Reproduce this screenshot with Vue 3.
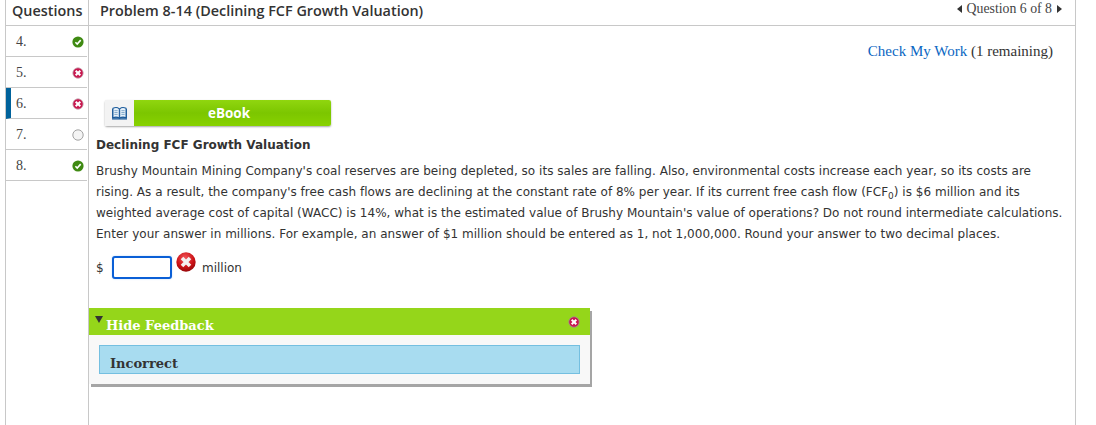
<template>
  <div class="page">
    <header class="topbar">
      <div class="questions-title">Questions</div>
      <div class="problem-title">Problem 8-14 (Declining FCF Growth Valuation)</div>
      <div class="pager">
        <span class="arrow-left"></span>
        <span>Question 6 of 8</span>
        <span class="arrow-right"></span>
      </div>
    </header>

    <div class="content">
      <aside class="sidebar">
        <div
          v-for="q in questions"
          :key="q.num"
          class="row"
          :class="{ current: q.num === 6 }"
        >
          <span class="num">{{ q.num }}.</span>
          <svg v-if="q.status === 'ok'" class="status" viewBox="0 0 12 12">
            <circle cx="6" cy="6" r="5.6" fill="#3f8a12" />
            <path d="M3.4 6.2 5.2 8 8.7 4.1" fill="none" stroke="#fff" stroke-width="1.6" />
          </svg>
          <svg v-else-if="q.status === 'bad'" class="status" viewBox="0 0 12 12">
            <circle cx="6" cy="6" r="5.2" fill="#c8174f" stroke="#c4aab2" stroke-width="0.8" />
            <path d="M3.7 3.7 8.3 8.3M8.300 3.700 3.700 8.300" fill="none" stroke="#fff" stroke-width="2" />
          </svg>
          <svg v-else class="status" viewBox="0 0 12 12">
            <circle cx="6" cy="6" r="5.2" fill="#f4f4f4" stroke="#8d8d8d" stroke-width="0.8" />
          </svg>
        </div>
      </aside>

      <main class="main">
        <div class="check-line">
          <a class="check-link">Check My Work</a>
          <span> (1 remaining)</span>
        </div>

        <div class="ebook">
          <div class="ebook-icon">
            <svg width="17" height="14" viewBox="0 0 18 15">
              <path d="M1 13V3h16v10" fill="#1b5a9a" />
              <path d="M2 2.5C4 1.5 7 1.500 8.800 3v10C7 11.800 4 11.800 2 12.500Z" fill="#e8f2fa" stroke="#1b5a9a" stroke-width="1.1" />
              <path d="M16 2.500C14 1.500 11 1.500 9.200 3v10C11 11.800 14 11.800 16 12.500Z" fill="#e8f2fa" stroke="#1b5a9a" stroke-width="1.1" />
              <path d="M3.500 5h3.500M3.500 7h3.500M3.500 9h3.500M11 5h3.500M11 7h3.500M11 9h3.500" stroke="#6f9cc4" stroke-width="0.9" />
              <path d="M1 13.800h16" stroke="#1b5a9a" stroke-width="1.4" />
            </svg>
          </div>
          <div class="ebook-btn">eBook</div>
        </div>

        <h2 class="heading">Declining FCF Growth Valuation</h2>

        <p class="text">
          Brushy Mountain Mining Company's coal reserves are being depleted, so its sales are falling. Also, environmental costs increase each year, so its costs are<br />
          rising. As a result, the company's free cash flows are declining at the constant rate of 8% per year. If its current free cash flow (FCF<sub>0</sub>) is $6 million and its<br />
          weighted average cost of capital (WACC) is 14%, what is the estimated value of Brushy Mountain's value of operations? Do not round intermediate calculations.<br />
          Enter your answer in millions. For example, an answer of $1 million should be entered as 1, not 1,000,000. Round your answer to two decimal places.
        </p>

        <div class="answer">
          <span class="dollar">$</span>
          <input class="answer-input" type="text" />
          <svg class="wrong" width="20" height="20" viewBox="0 0 20 20">
            <defs>
              <radialGradient id="redBall" cx="45%" cy="30%" r="75%">
                <stop offset="0" stop-color="#f2565a" />
                <stop offset="0.6" stop-color="#cc1216" />
                <stop offset="1" stop-color="#8c0608" />
              </radialGradient>
            </defs>
            <circle cx="10" cy="10" r="9.700" fill="url(#redBall)" />
            <path d="M6 6 14 14M14 6 6 14" stroke="#f4f0f0" stroke-width="3.600" />
          </svg>
          <span class="unit">million</span>
        </div>

        <section class="feedback">
          <div class="feedback-head">
            <span class="caret"></span>
            <span class="hide-label">Hide Feedback</span>
            <svg class="feedback-close" width="12" height="12" viewBox="0 0 12 12">
              <circle cx="6" cy="6" r="5.200" fill="#c8174f" stroke="#a58c94" stroke-width="0.800" />
              <path d="M3.700 3.700 8.300 8.300M8.300 3.700 3.700 8.300" fill="none" stroke="#fff" stroke-width="2" />
            </svg>
          </div>
          <div class="feedback-body">
            <div class="incorrect">Incorrect</div>
          </div>
        </section>
      </main>
    </div>
  </div>
</template>

<script setup>
const questions = [
  { num: 4, status: "ok" },
  { num: 5, status: "bad" },
  { num: 6, status: "bad" },
  { num: 7, status: "none" },
  { num: 8, status: "ok" },
];
</script>

<style>
html,
body {
  margin: 0;
  background: #fff;
  overflow: hidden;
}
</style>

<style scoped>
.page {
  width: 1071px;
  height: 425px;
  margin-left: 5px;
  border-left: 1px solid #c8c8c8;
  border-right: 1px solid #c8c8c8;
  box-sizing: border-box;
  overflow: hidden;
  color: #333;
}

.topbar {
  display: flex;
  align-items: center;
  height: 26px;
  border-bottom: 1px solid #c8c8c8;
  box-sizing: border-box;
}

.questions-title {
  width: 83px;
  box-sizing: border-box;
  height: 100%;
  padding-left: 6px;
  border-right: 1px solid #c8c8c8;
  font: 600 14.400px/22px "Open Sans", sans-serif;
}

.problem-title {
  flex: 1;
  padding-left: 11px;
  font: 600 14.400px/22px "Open Sans", sans-serif;
  height: 100%;
}

.pager {
  display: flex;
  align-items: center;
  gap: 5px;
  padding-right: 13px;
  height: 100%;
  margin-top: -8px;
  font: 13.800px "Liberation Serif", serif;
  color: #444;
}

.arrow-left,
.arrow-right {
  width: 0;
  height: 0;
  border-top: 4px solid transparent;
  border-bottom: 4px solid transparent;
}

.arrow-left {
  border-right: 5px solid #333;
}

.arrow-right {
  border-left: 5px solid #333;
}

.content {
  display: flex;
  height: 399px;
}

.sidebar {
  width: 83px;
  height: 100%;
  box-sizing: border-box;
  border-right: 1px solid #c8c8c8;
  flex-shrink: 0;
}

.row {
  display: flex;
  align-items: center;
  justify-content: space-between;
  height: 31px;
  box-sizing: border-box;
  margin-right: 1px;
  padding: 2px 3px 0 10px;
  border-bottom: 1px solid #c8c8c8;
  font: 14px "Liberation Serif", serif;
  color: #444;
}

.row.current {
  padding-left: 5px;
  border-left: 5px solid #00629b;
}

.status {
  width: 12px;
  height: 12px;
  margin-top: -1px;
}

.main {
  flex: 1;
  min-width: 0;
  padding: 0 0 0 7px;
}

.check-line {
  margin-top: 15px;
  padding-right: 22px;
  text-align: right;
  font: 15px/20px "Liberation Serif", serif;
  color: #333;
}

.check-link {
  color: #0a66c2;
}

.ebook {
  display: flex;
  width: 226px;
  height: 26px;
  margin: 39px 0 0 9px;
  box-shadow: 0 1px 2px rgba(0, 0, 0, 0.35);
  border-radius: 2px;
}

.ebook-icon {
  width: 29px;
  display: flex;
  align-items: center;
  justify-content: center;
  background: #f3f3f3;
}

.ebook-btn {
  flex: 1;
  padding-right: 7px;
  text-align: center;
  font: 700 13.500px/26px "Open Sans", sans-serif;
  color: #fff;
  background: linear-gradient(#90d60f, #7cc600 50%, #88d200);
  border-radius: 0 2px 2px 0;
}

.heading {
  margin: 11px 0 0;
  font: 700 12px/16px "DejaVu Sans", sans-serif;
  color: #333;
}

.text {
  margin: 8px 0 0;
  font: 12px/21px "DejaVu Sans", sans-serif;
  letter-spacing: 0.02px;
  color: #333;
  white-space: nowrap;
}

.text sub {
  font-size: 9px;
  line-height: 0;
}

.answer {
  display: flex;
  align-items: center;
  margin-top: 11px;
  height: 24px;
  font: 12px "DejaVu Sans", sans-serif;
}

.dollar {
  width: 16px;
}

.answer-input {
  width: 60px;
  height: 23px;
  margin-top: -2px;
  box-sizing: border-box;
  padding: 0;
  border: 2px solid #0a5fd6;
  border-radius: 3px;
  box-shadow: 0 0 2px #bcd8f5;
  outline: none;
  background: #fff;
}

.wrong {
  margin: -13px 0 0 4px;
}

.unit {
  margin-left: 6px;
}

.feedback {
  width: 501px;
  margin: 28px 0 0 -7px;
  background: #f8f8f8;
  box-shadow: 2px 3px 0 #a5a5a5;
}

.feedback-head {
  position: relative;
  display: flex;
  align-items: center;
  justify-content: space-between;
  height: 27px;
  padding: 8px 10px 0 17px;
  box-sizing: border-box;
  background: #95d61a;
}

.caret {
  position: absolute;
  left: 6px;
  top: 8px;
  border-left: 4px solid transparent;
  border-right: 4px solid transparent;
  border-top: 7px solid #333;
}

.hide-label {
  font: 700 13px/20px "DejaVu Serif", serif;
  color: #fff;
}

.feedback-close {
  margin-top: -7px;
}

.feedback-body {
  padding: 10px 10px 10px;
}

.incorrect {
  height: 29px;
  box-sizing: border-box;
  padding: 8px 10px 0;
  border: 1px solid #74bfe0;
  background: #a8dcf0;
  font: 700 13px/20px "DejaVu Serif", serif;
  color: #333;
}
</style>
